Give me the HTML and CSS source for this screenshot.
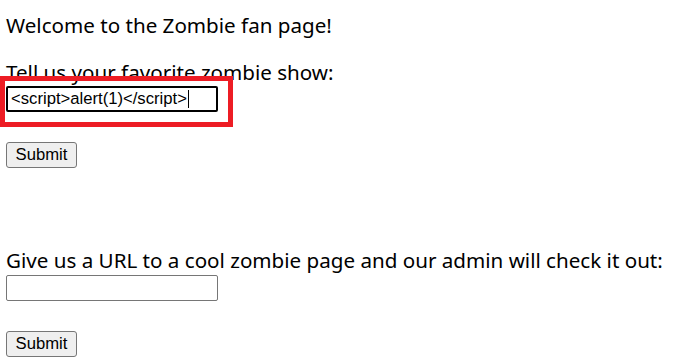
FILE: index.html
```html
<!DOCTYPE html>
<html>
<head>
<meta charset="utf-8">
<link rel="stylesheet" href="styles.css">
</head>
<body>
<div class="page">
  <p class="line title">Welcome to the Zombie fan page!</p>
  <form class="form first">
    <label class="line">Tell us your favorite zombie show:</label>
    <div class="field focused"><span class="value">&lt;script&gt;alert(1)&lt;/script&gt;</span><span class="caret"></span></div>
    <button type="button" class="btn">Submit</button>
  </form>
  <form class="form second">
    <label class="line">Give us a URL to a cool zombie page and our admin will check it out:</label>
    <div class="field url"></div>
    <button type="button" class="btn">Submit</button>
  </form>
</div>
<div class="annotation"></div>
</body>
</html>
```
FILE: styles.css
```css
html, body {
  margin: 0;
  padding: 0;
  background: #ffffff;
}
body {
  width: 688px;
  height: 363px;
  overflow: hidden;
  position: relative;
}
.page {
  padding: 12px 0 0 6px;
  display: flex;
  flex-direction: column;
  font-family: "Noto Sans", "Open Sans", sans-serif;
  font-size: 20.6px;
  color: #000;
}
.line {
  display: block;
  margin: 0;
  line-height: 27px;
  white-space: nowrap;
}
.title {
  margin-bottom: 20px;
}
.form {
  display: flex;
  flex-direction: column;
  align-items: flex-start;
}
.second {
  margin-top: 79px;
}
.field {
  box-sizing: border-box;
  width: 212px;
  height: 26px;
  border: 1px solid #767676;
  border-radius: 2px;
  background: #fff;
  display: flex;
  align-items: center;
  padding-left: 4px;
  font-family: "Liberation Sans", Arial, sans-serif;
  font-size: 16.67px;
  color: #000;
}
.field.url {
  margin-top: 1px;
}
.field.focused {
  border: 2px solid #000;
  padding-left: 3px;
}
.caret {
  display: inline-block;
  width: 1px;
  height: 18px;
  background: #000;
  margin-left: 1px;
}
.btn {
  margin-top: 30px;
  box-sizing: border-box;
  width: 71px;
  height: 26px;
  padding: 0;
  border: 1px solid #767676;
  border-radius: 3px;
  background: #efefef;
  font-family: "Liberation Sans", Arial, sans-serif;
  font-size: 16.67px;
  color: #000;
}
.annotation {
  position: absolute;
  left: 0;
  top: 76px;
  width: 233px;
  height: 51px;
  box-sizing: border-box;
  border: 5px solid #ed1c24;
}
```
